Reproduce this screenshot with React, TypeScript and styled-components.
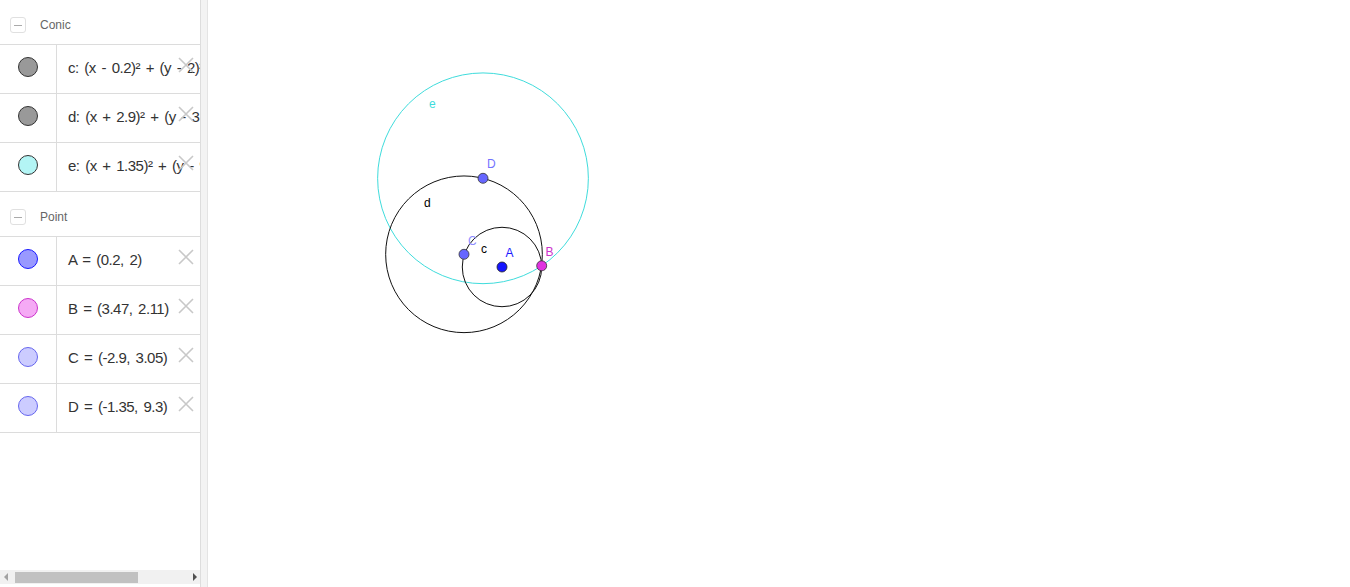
import React from "react";
import styled, { createGlobalStyle } from "styled-components";

const GlobalStyle = createGlobalStyle`
  html, body {
    margin: 0;
    padding: 0;
    background: #ffffff;
    overflow: hidden;
  }
  body {
    font-family: "Liberation Sans", Arial, sans-serif;
  }
`;

interface Item {
  fill: string;
  stroke: string;
  text: string;
}

interface Group {
  title: string;
  items: Item[];
}

const groups: Group[] = [
  {
    title: "Conic",
    items: [
      { fill: "#999999", stroke: "#333333", text: "c: (x - 0.2)² + (y - 2)² = 16.01" },
      { fill: "#999999", stroke: "#333333", text: "d: (x + 2.9)² + (y - 3.05)² = 40.61" },
      { fill: "#b3f5f5", stroke: "#333333", text: "e: (x + 1.35)² + (y - 9.3)² = 71.97" },
    ],
  },
  {
    title: "Point",
    items: [
      { fill: "#9999ff", stroke: "#1a1aff", text: "A = (0.2, 2)" },
      { fill: "#f5aaf5", stroke: "#cc33cc", text: "B = (3.47, 2.11)" },
      { fill: "#ccccff", stroke: "#6666ee", text: "C = (-2.9, 3.05)" },
      { fill: "#ccccff", stroke: "#6666ee", text: "D = (-1.35, 9.3)" },
    ],
  },
];

const Page = styled.div`
  display: flex;
  height: 100vh;
  width: 100vw;
`;

const Panel = styled.aside`
  width: 200px;
  flex: none;
  display: flex;
  flex-direction: column;
  background: #ffffff;
`;

const List = styled.div`
  flex: 1;
  overflow: hidden;
`;

const GroupHeader = styled.div`
  height: 45px;
  box-sizing: border-box;
  padding: 6px 0 0 10px;
  display: flex;
  align-items: center;
  gap: 14px;
  border-bottom: 1px solid #dcdcdc;
  color: #666666;
  font-size: 12px;
`;

const Collapse = styled.span`
  width: 14px;
  height: 14px;
  border: 1px solid #e0e0e0;
  border-radius: 3px;
  display: flex;
  align-items: center;
  justify-content: center;
  &::after {
    content: "";
    width: 8px;
    height: 1px;
    background: #aaaaaa;
  }
`;

const Row = styled.div`
  position: relative;
  height: 49px;
  box-sizing: border-box;
  display: flex;
  border-bottom: 1px solid #dcdcdc;
`;

const MarkerCell = styled.div`
  width: 57px;
  flex: none;
  box-sizing: border-box;
  padding-bottom: 4px;
  display: flex;
  align-items: center;
  justify-content: center;
  border-right: 1px solid #dcdcdc;
`;

const Marker = styled.span<{ $fill: string; $stroke: string }>`
  width: 18px;
  height: 18px;
  border-radius: 50%;
  background: ${(p) => p.$fill};
  border: 1px solid ${(p) => p.$stroke};
`;

const Formula = styled.div`
  flex: 1;
  padding: 0 0 4px 11px;
  display: flex;
  align-items: center;
  white-space: nowrap;
  overflow: hidden;
  font-size: 15px;
  letter-spacing: -0.5px;
  word-spacing: 2px;
  color: #333333;
`;

const DeleteBtn = styled.span`
  position: absolute;
  right: 6px;
  top: 12px;
  width: 16px;
  height: 16px;
  display: flex;
`;

const HScroll = styled.div`
  height: 14px;
  margin-bottom: 3px;
  background: #f1f1f1;
  display: flex;
  align-items: center;
  padding: 0 3px 0 4px;
  gap: 4px;
`;

const Arrow = styled.span<{ $dir: "left" | "right"; $color: string }>`
  width: 0;
  height: 0;
  border-top: 4px solid transparent;
  border-bottom: 4px solid transparent;
  ${(p) =>
    p.$dir === "left"
      ? `border-right: 4px solid ${p.$color};`
      : `border-left: 4px solid ${p.$color};`}
`;

const Track = styled.div`
  flex: 1;
  height: 11px;
  display: flex;
`;

const Thumb = styled.div`
  width: 123px;
  height: 100%;
  margin-left: 3px;
  background: #c1c1c1;
`;

const Splitter = styled.div`
  width: 6px;
  flex: none;
  background: #f3f3f3;
  border-left: 1px solid #dddddd;
  border-right: 1px solid #e4e4e4;
`;

const Canvas = styled.main`
  flex: 1;
  position: relative;
  background: #ffffff;
`;

const Drawing = styled.svg`
  display: block;
  width: 100%;
  height: 100%;
  font-family: "Liberation Sans", Arial, sans-serif;
  font-size: 12px;
`;

const CrossIcon = () => (
  <svg width="16" height="16" viewBox="0 0 16 16">
    <path d="M1 1 L15 15 M15 1 L1 15" stroke="#c8c8c8" strokeWidth="1.6" fill="none" />
  </svg>
);

const A = { x: 502, y: 267 };
const B = { x: 541.7, y: 265.8 };
const C = { x: 464, y: 254.3 };
const D = { x: 483, y: 178.3 };
const dist = (p: { x: number; y: number }, q: { x: number; y: number }) =>
  Math.hypot(p.x - q.x, p.y - q.y);

const App: React.FC = () => {
  return (
    <>
      <GlobalStyle />
      <Page>
        <Panel>
          <List>
            {groups.map((g) => (
              <React.Fragment key={g.title}>
                <GroupHeader>
                  <Collapse />
                  {g.title}
                </GroupHeader>
                {g.items.map((it) => (
                  <Row key={it.text}>
                    <MarkerCell>
                      <Marker $fill={it.fill} $stroke={it.stroke} />
                    </MarkerCell>
                    <Formula>{it.text}</Formula>
                    <DeleteBtn>
                      <CrossIcon />
                    </DeleteBtn>
                  </Row>
                ))}
              </React.Fragment>
            ))}
          </List>
          <HScroll>
            <Arrow $dir="left" $color="#a3a3a3" />
            <Track>
              <Thumb />
            </Track>
            <Arrow $dir="right" $color="#505050" />
          </HScroll>
        </Panel>
        <Splitter />
        <Canvas>
          <Drawing viewBox="208 0 1142 587" preserveAspectRatio="xMinYMin slice">
            <circle cx={D.x} cy={D.y} r={dist(D, B)} fill="none" stroke="#3fdcdc" strokeWidth="1" />
            <circle cx={C.x} cy={C.y} r={dist(C, D)} fill="none" stroke="#111111" strokeWidth="1" />
            <circle cx={A.x} cy={A.y} r={dist(A, B)} fill="none" stroke="#111111" strokeWidth="1" />

            <text x="429" y="108" fill="#3fdcdc">e</text>
            <text x="424" y="207" fill="#000000">d</text>
            <text x="481" y="253" fill="#000000">c</text>

            <circle cx={D.x} cy={D.y} r="5" fill="#6666ff" stroke="#333333" strokeWidth="0.8" />
            <circle cx={C.x} cy={C.y} r="5" fill="#6666ff" stroke="#333333" strokeWidth="0.8" />
            <circle cx={A.x} cy={A.y} r="5" fill="#1515ff" stroke="#222222" strokeWidth="0.8" />
            <circle cx={B.x} cy={B.y} r="5" fill="#e033e0" stroke="#333333" strokeWidth="0.8" />

            <text x="487" y="168" fill="#7373ff">D</text>
            <text x="468" y="245" fill="#8c8cff">C</text>
            <text x="505.5" y="257" fill="#1a1aff">A</text>
            <text x="545.5" y="256" fill="#cc33cc">B</text>
          </Drawing>
        </Canvas>
      </Page>
    </>
  );
};

export default App;
